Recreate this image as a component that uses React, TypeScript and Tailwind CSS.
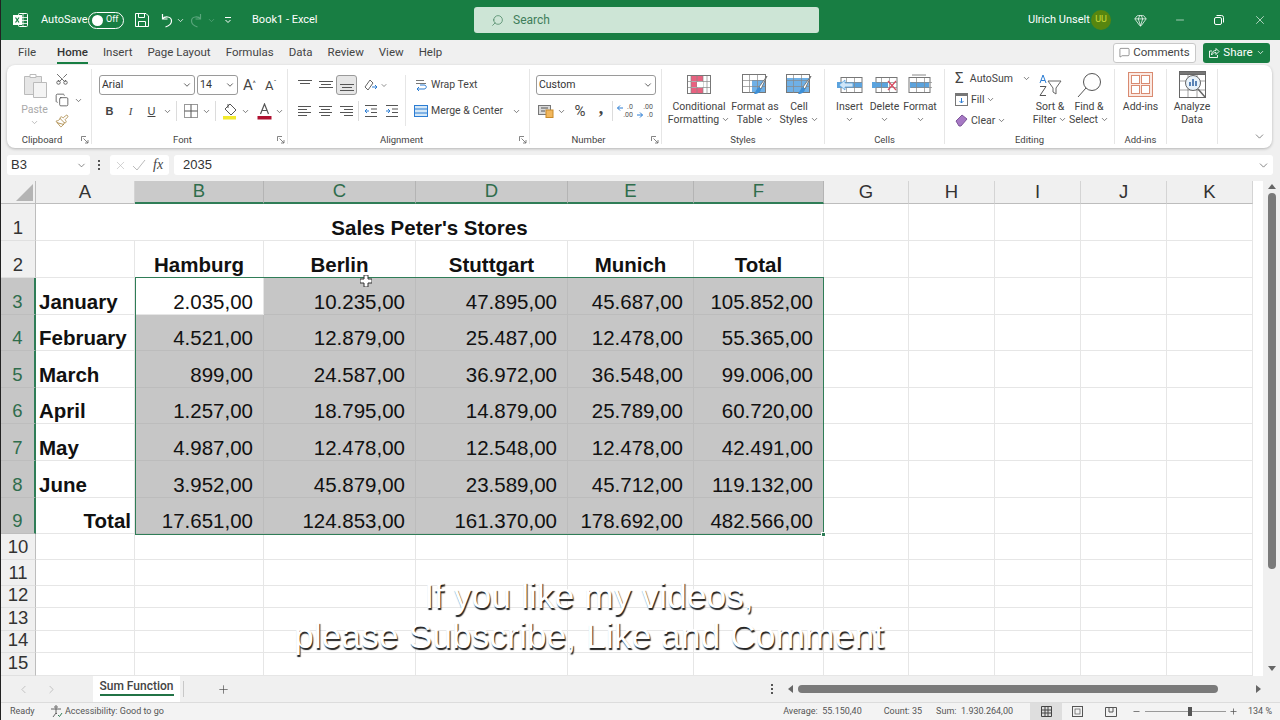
import { ChevronDown, ChevronLeft, ChevronRight, Minus, Plus, Search, X, Copy, Scissors, Paintbrush, Gem, MessageSquare } from "lucide-react";
import type { ReactNode } from "react";

const columns = ["A", "B", "C", "D", "E", "F", "G", "H", "I", "J", "K"];
const selectedColumns = ["B", "C", "D", "E", "F"];

const salesRows = [
  ["January", "2.035,00", "10.235,00", "47.895,00", "45.687,00", "105.852,00"],
  ["February", "4.521,00", "12.879,00", "25.487,00", "12.478,00", "55.365,00"],
  ["March", "899,00", "24.587,00", "36.972,00", "36.548,00", "99.006,00"],
  ["April", "1.257,00", "18.795,00", "14.879,00", "25.789,00", "60.720,00"],
  ["May", "4.987,00", "12.478,00", "12.548,00", "12.478,00", "42.491,00"],
  ["June", "3.952,00", "45.879,00", "23.589,00", "45.712,00", "119.132,00"],
  ["Total", "17.651,00", "124.853,00", "161.370,00", "178.692,00", "482.566,00"],
];

const cities = ["Hamburg", "Berlin", "Stuttgart", "Munich", "Total"];

function Chev({ className = "text-[#555]" }: { className?: string }) {
  return <ChevronDown size={9} strokeWidth={2} className={className} />;
}

function Slot({ children, className = "w-[21px]" }: { children: ReactNode; className?: string }) {
  return <div className={`h-5 flex items-center justify-center shrink-0 ${className}`}>{children}</div>;
}

function VSep() {
  return <div className="w-px h-5 bg-[#dcdcdc] mx-[3px] shrink-0" />;
}

function HorizontalAlign({ kind }: { kind: "left" | "center" | "right" }) {
  const short = kind === "left" ? "M1 5.500h9M1 11.500h9" : kind === "center" ? "M3 5.500h9M3 11.500h9" : "M5 5.500h9M5 11.500h9";
  return (
    <svg width="15" height="14" viewBox="0 0 15 14" fill="none" stroke="#555">
      <path d="M1 2.500h13M1 8.500h13" />
      <path d={short} />
    </svg>
  );
}

function VerticalAlign({ pos }: { pos: "top" | "mid" | "bot" }) {
  const y = pos === "top" ? [2.5, 5.5] : pos === "mid" ? [3.5, 6.5, 9.5] : [6.5, 9.5, 12.5];
  return (
    <svg width="16" height="14" viewBox="0 0 16 14" stroke="#555" strokeWidth="1">
      {y.map((v, i) => (
        <line key={v} x1={i % 2 ? 3 : 1} x2={i % 2 ? 13 : 15} y1={v} y2={v} />
      ))}
    </svg>
  );
}

function ConditionalIcon() {
  return (
    <svg width="24" height="20" viewBox="0 0 24 20">
      <rect x="0.5" y="0.5" width="23" height="18" fill="#fff" stroke="#777" />
      <rect x="4" y="1" width="12" height="5" fill="#e8617f" />
      <rect x="4" y="7" width="6" height="5" fill="#e8617f" />
      <rect x="4" y="13" width="12" height="5" fill="#e8617f" />
      <path d="M4 1v18M10 1v18M16 1v18M20 1v18M1 6.5h22M1 12.5h22" stroke="#888" strokeWidth="0.7" fill="none" />
      <rect x="10" y="7" width="6" height="5" fill="#fff" />
    </svg>
  );
}

function TableBrushIcon({ cell }: { cell?: boolean }) {
  return (
    <svg width="26" height="24" viewBox="0 0 26 24">
      <rect x="0.5" y="1.5" width="23" height="18" fill="#fff" stroke="#777" />
      <rect x={cell ? 1 : 10} y={cell ? 5 : 7} width={cell ? 22 : 13} height={cell ? 14 : 12} fill="#6fb0e6" />
      <path d="M7.5 2v18M15.5 2v18M1 7.5h22M1 13.5h22" stroke="#888" strokeWidth="0.7" fill="none" />
      <path d="M25 3 17 14l2 2z" fill="#fff" stroke="#666" strokeWidth="0.8" />
      <path d="M17 14c-2 1-3 4-5 7 4 0 7-2 7-5z" fill="#3d8fd6" />
    </svg>
  );
}

function CellsIcon({ kind }: { kind: "insert" | "delete" | "format" }) {
  return (
    <svg width="26" height="21" viewBox="0 0 26 21">
      {kind === "format" && <path d="M5 1h14" stroke="#888" strokeWidth="1" />}
      <rect x={kind === "format" ? 2 : 4} y="3.5" width="21" height="15" fill="#fff" stroke="#777" />
      <rect x={kind === "format" ? 3 : 0} y="8" width={kind === "format" ? 19 : kind === "delete" ? 16 : 25} height="6" fill="#5ba3de" />
      <path d="M9.5 4v14M17.5 4v14M4 8.5h21M4 13.5h21" stroke="#888" strokeWidth="0.7" fill="none" />
      {kind === "insert" && <path d="M8 6 2 11l6 5v-3h8v-4H8z" fill="#cfe6f8" stroke="#5ba3de" strokeWidth="0.8" />}
      {kind === "delete" && <path d="m16 7 8 9M24 7l-8 9" stroke="#d9485f" strokeWidth="1.2" />}
    </svg>
  );
}

function BigButton({ icon, lines, className, chevLine }: { icon: ReactNode; lines: string[]; className: string; chevLine?: boolean }) {
  return (
    <div className={`flex flex-col items-center shrink-0 ${className}`}>
      <div className="h-[31px] flex items-center justify-center">{icon}</div>
      {lines.map((line, i) => (
        <div key={line} className="h-[13px] leading-[13px] whitespace-nowrap flex items-center gap-[2px]">
          {line}
          {chevLine && i === lines.length - 1 && <Chev />}
        </div>
      ))}
      {!chevLine && lines.length === 1 && (
        <div className="h-[13px] flex items-center">
          <Chev />
        </div>
      )}
    </div>
  );
}

function Launcher() {
  return (
    <svg width="8" height="8" viewBox="0 0 8 8" className="absolute right-[2px] bottom-0" fill="none" stroke="#666" strokeWidth="0.8">
      <path d="M0.5 5V0.5H5M2.5 2.5 7 7M7 4v3H4" />
    </svg>
  );
}

function Group({ label, className, launcher, children }: { label: string; className: string; launcher?: boolean; children: ReactNode }) {
  return (
    <div className={`relative my-[4px] flex flex-col shrink-0 border-r border-[#e6e6e6] ${className}`}>
      <div className="flex-1 min-h-0">{children}</div>
      <div className={`h-[14px] -mb-[3px] text-center text-[9.5px] leading-[14px] text-[#444] ${launcher ? "pr-[14px]" : ""}`}>{label}</div>
      {launcher && <Launcher />}
    </div>
  );
}

function SelectBox({ text, className }: { text: string; className: string }) {
  return (
    <div className={`h-5 bg-white border border-[#9a9a9a] rounded-[3px] flex items-center justify-between pl-[2px] pr-[2px] text-[10.5px] text-[#333] shrink-0 ${className}`}>
      <span>{text}</span>
      <ChevronDown size={10} strokeWidth={2} className="text-[#444]" />
    </div>
  );
}

function TitleBar() {
  return (
    <div className="h-10 bg-[#187e43] flex items-center text-white text-[11px] shrink-0">
      <svg width="16" height="16" viewBox="0 0 16 16" className="ml-3" fill="none" stroke="#fff">
        <rect x="5.5" y="1.5" width="9" height="13" rx="1" />
        <path d="M10 2v12M6 5.5h8M6 8.5h8M6 11.5h8" strokeWidth="0.8" />
        <rect x="0.5" y="3.5" width="8" height="9" fill="#fff" />
        <path d="m2.5 5.5 3.5 5M6 5.5l-3.5 5" stroke="#187e43" strokeWidth="1.2" />
      </svg>
      <span className="ml-[12px] w-[46px]">AutoSave</span>
      <div className="ml-[1px] w-9 h-[17px] rounded-full border border-white flex items-center pl-[3px] gap-[3px]">
        <div className="size-[11px] rounded-full bg-white" />
        <span className="text-[9px]">Off</span>
      </div>
      <svg width="14" height="14" viewBox="0 0 14 14" className="ml-[11px]" fill="none" stroke="#fff" strokeWidth="1">
        <path d="M0.5 0.5h10.5l2.5 2.5v10.5H0.5z" />
        <path d="M3.5 0.5v4h6v-4M3.5 13.5v-5h7v5" />
      </svg>
      <svg width="15" height="15" viewBox="0 0 15 15" className="ml-[9px]" fill="none" stroke="#fff" strokeWidth="1.2">
        <path d="M4.5 1v5h5M4.5 6c2-3 9-3 9 2 0 3-3 5-6 6" />
      </svg>
      <ChevronDown size={9} className="ml-[3px]" />
      <svg width="15" height="15" viewBox="0 0 15 15" className="ml-[5px]" fill="none" stroke="#5aa57c" strokeWidth="1.2">
        <path d="M10.5 1v5h-5M10.5 6c-2-3-9-3-9 2 0 3 3 5 6 6" />
      </svg>
      <ChevronDown size={9} className="ml-[2px] text-[#5aa57c]" />
      <svg width="8" height="8" viewBox="0 0 8 8" className="ml-[8px]" fill="none" stroke="#fff" strokeWidth="1">
        <path d="M1 1.5h6M1.500 4l2.500 2.500L6.500 4" />
      </svg>
      <span className="ml-5 w-[66px] whitespace-nowrap">Book1 - Excel</span>
      <div className="ml-[156px] w-[345px] h-[26px] bg-[#cde5d6] rounded-[3px] flex items-center pl-[17px] text-[#3f7d5a] text-[12px]">
        <Search size={13} strokeWidth={1.3} className="-scale-x-100" />
        <span className="ml-[9px]">Search</span>
      </div>
      <span className="ml-[209px] w-[57px] whitespace-nowrap">Ulrich Unselt</span>
      <div className="ml-[6px] size-5 rounded-full bg-[#57860f] text-[#c9db3c] text-[9px] flex items-center justify-center">UU</div>
      <Gem size={13} strokeWidth={1.4} className="ml-[23px]" />
      <Minus size={12} strokeWidth={1.2} className="ml-[27px]" />
      <svg width="10" height="10" viewBox="0 0 10 10" className="ml-[28px]" fill="none" stroke="#fff">
        <rect x="0.5" y="2.500" width="7" height="7" rx="1.500" />
        <path d="M2.500 0.500h5a2 2 0 0 1 2 2v5" />
      </svg>
      <X size={14} strokeWidth={1.1} className="ml-[29px]" />
    </div>
  );
}

function MenuBar() {
  const tabs = [
    ["File", "ml-[17px]"],
    ["Home", "ml-[21px]"],
    ["Insert", "ml-[15px]"],
    ["Page Layout", "ml-[15px]"],
    ["Formulas", "ml-[15px]"],
    ["Data", "ml-[15px]"],
    ["Review", "ml-[15px]"],
    ["View", "ml-[15px]"],
    ["Help", "ml-[15px]"],
  ];
  return (
    <div className="h-[25px] flex items-center text-[11.5px] text-[#444] bg-[#f0f0f0] shrink-0">
      {tabs.map(([tab, margin]) => (
        <div key={tab} className={`relative h-full flex items-center whitespace-nowrap ${margin}`}>
          <span className={tab === "Home" ? "font-medium text-[#333]" : ""}>{tab}</span>
          {tab === "Home" && <div className="absolute left-0 right-0 bottom-[1px] h-[2px] bg-[#187e43]" />}
        </div>
      ))}
      <div className="ml-auto w-[83px] h-[20px] bg-white border border-[#c8c8c8] rounded-[3px] flex items-center justify-center gap-[3px]">
        <MessageSquare size={11} strokeWidth={1.2} />
        Comments
      </div>
      <div className="ml-[7px] mr-[10px] w-[67px] h-[20px] bg-[#187e43] text-white rounded-[3px] flex items-center justify-center gap-[3px]">
        <svg width="12" height="12" viewBox="0 0 12 12" fill="none" stroke="#fff" strokeWidth="0.9">
          <path d="M4 4H1.500v6.500h8V8" />
          <path d="M3.500 8c0-3 2-4.500 4.500-4.500V1.500L11 4.500 8 7.500V5.500C6 5.500 4.500 6.500 3.500 8z" />
        </svg>
        Share
        <ChevronDown size={9} />
      </div>
    </div>
  );
}

function Ribbon() {
  return (
    <div className="ml-[6px] w-[1265px] h-[83px] bg-white rounded-lg shadow-[0_1px_3px_rgba(0,0,0,0.25)] flex text-[10.5px] text-[#444] shrink-0">
      <Group label="Clipboard" className="w-[85px]" launcher>
        <div className="flex pl-[15px]">
          <div className="w-[25px] flex flex-col items-center text-[#aaa]">
            <svg width="24" height="26" viewBox="0 0 24 26" className="mt-[3px]" fill="#e6e6e6" stroke="#bbb">
              <path d="M1.500 4.500h17v18h-17z" />
              <path d="M7 2.500h6v3H7z" fill="#fff" />
              <path d="M10.500 10.500h13v15h-13z" fill="#f4f4f4" />
            </svg>
            <span className="mt-[5px] leading-[13px]">Paste</span>
            <ChevronDown size={9} className="mt-[2px]" />
          </div>
          <div className="ml-2 pt-[3px] flex flex-col items-start gap-[7px]">
            <Scissors size={14} strokeWidth={1.3} className="-rotate-90 text-[#444]" />
            <div className="flex items-center gap-[5px]">
              <Copy size={14} strokeWidth={1.3} className="text-[#444]" />
              <Chev />
            </div>
            <Paintbrush size={14} strokeWidth={1.3} className="text-[#a07a30]" />
          </div>
        </div>
      </Group>

      <Group label="Font" className="w-[196px]" launcher>
        <div className="pl-[7px] pt-[6px]">
          <div className="flex items-center">
            <SelectBox text="Arial" className="w-[96px]" />
            <SelectBox text="14" className="ml-[2px] w-[41px]" />
            <span className="ml-[5px] text-[15px] leading-none w-[21px]">
              A<sup className="text-[7px]">^</sup>
            </span>
            <span className="ml-[1px] text-[13px] leading-none w-[16px]">
              A<sup className="text-[7px]">ˇ</sup>
            </span>
          </div>
          <div className="flex items-center mt-[6px]">
            <Slot><b className="text-[11px] font-['Liberation_Sans',sans-serif]">B</b></Slot>
            <Slot><i className="text-[11px] font-['Liberation_Serif',serif]">I</i></Slot>
            <Slot><u className="text-[11px] font-['Liberation_Sans',sans-serif]">U</u></Slot>
            <Slot className="w-[11px]"><Chev /></Slot>
            <VSep />
            <Slot>
              <svg width="14" height="14" viewBox="0 0 14 14" fill="none" stroke="#999">
                <rect x="0.5" y="0.500" width="13" height="13" />
                <path d="M7 0.500v13M0.500 7h13" stroke="#555" />
              </svg>
            </Slot>
            <Slot className="w-[11px]"><Chev /></Slot>
            <VSep />
            <Slot>
              <svg width="16" height="17" viewBox="0 0 16 17">
                <path d="m8 1 6 6-5 5-6-6z" fill="#fff" stroke="#555" />
                <path d="M6 1v4" stroke="#555" />
                <rect x="1" y="13" width="13" height="3.500" fill="#f2ea2c" />
              </svg>
            </Slot>
            <Slot className="w-[11px]"><Chev /></Slot>
            <Slot className="ml-[3px] w-[20px]">
              <svg width="15" height="17" viewBox="0 0 15 17">
                <path d="m3.500 11 4-10 4 10M5 7.500h5" stroke="#555" fill="none" strokeWidth="1.200" />
                <rect x="0.500" y="13" width="14" height="3.500" fill="#b01030" />
              </svg>
            </Slot>
            <Slot className="w-[11px]"><Chev /></Slot>
          </div>
        </div>
      </Group>

      <Group label="Alignment" className="w-[242px]" launcher>
        <div className="flex pt-[6px]">
          <div className="pl-[6px] w-[118px] h-[51px] border-r border-[#e6e6e6]">
            <div className="flex items-center">
              <Slot><VerticalAlign pos="top" /></Slot>
              <Slot><VerticalAlign pos="mid" /></Slot>
              <Slot className="w-[21px] bg-[#e6e6e6] border border-[#9a9a9a] rounded-[3px]"><VerticalAlign pos="bot" /></Slot>
              <Slot className="ml-[3px] w-[20px]">
                <svg width="15" height="14" viewBox="0 0 15 14" fill="none" stroke="#666">
                  <path d="m2 9 5-7 3 3-5 7z" />
                  <path d="M9 9h5m-2-2 2 2-2 2" stroke="#2b7cd3" />
                </svg>
              </Slot>
              <Slot className="w-[8px]"><Chev /></Slot>
            </div>
            <div className="flex items-center mt-[6px]">
              <Slot><HorizontalAlign kind="left" /></Slot>
              <Slot><HorizontalAlign kind="center" /></Slot>
              <Slot><HorizontalAlign kind="right" /></Slot>
              <div className="w-px h-5 bg-[#dcdcdc] mx-[1px]" />
              <Slot className="w-[21px]">
                <svg width="14" height="14" viewBox="0 0 14 14" fill="none" stroke="#555">
                  <path d="M1 1.500h12M7 5h6M7 8.500h6M1 12.500h12" />
                  <path d="M5 7H1m2-2-2 2 2 2" stroke="#2b7cd3" />
                </svg>
              </Slot>
              <Slot className="w-[21px]">
                <svg width="14" height="14" viewBox="0 0 14 14" fill="none" stroke="#555">
                  <path d="M1 1.500h12M7 5h6M7 8.500h6M1 12.500h12" />
                  <path d="M1 7h4M3 5l2 2-2 2" stroke="#2b7cd3" />
                </svg>
              </Slot>
            </div>
          </div>
          <div className="pl-2 flex flex-col">
            <div className="h-5 flex items-center gap-[2px]">
              <svg width="14" height="14" viewBox="0 0 14 14" fill="none">
                <path d="M2 2.500h8M2 5.500h10" stroke="#777" />
                <path d="M3 11h7c3 0 3-4 0-4H6M5 9l-2 2 2 2" stroke="#2b7cd3" />
              </svg>
              <span className="ml-[1px]">Wrap Text</span>
            </div>
            <div className="h-5 mt-[6px] flex items-center gap-[2px]">
              <svg width="14" height="14" viewBox="0 0 14 14" fill="#d5e8f7" stroke="#2b7cd3">
                <rect x="0.500" y="1.500" width="13" height="11" />
                <path d="M1 5h12M1 9h12" />
              </svg>
              <span className="ml-[1px] w-[71px] whitespace-nowrap">Merge &amp; Center</span>
              <span className="ml-[8px]"><Chev /></span>
            </div>
          </div>
        </div>
      </Group>

      <Group label="Number" className="w-[132px]" launcher>
        <div className="pl-[6px] pt-[6px]">
          <SelectBox text="Custom" className="w-[120px]" />
          <div className="flex items-center mt-[6px]">
            <Slot className="w-[20px]">
              <svg width="16" height="13" viewBox="0 0 16 13">
                <rect x="0.500" y="0.500" width="12" height="9" fill="#d9d9d9" stroke="#777" />
                <path d="M3 3h7M3 6h4" stroke="#555" />
                <rect x="8" y="5" width="7" height="7.500" fill="#f2b75c" stroke="#c88a2a" />
              </svg>
            </Slot>
            <Slot className="w-[10px]"><Chev /></Slot>
            <Slot className="ml-[4px] w-[20px]"><span className="text-[15px]">%</span></Slot>
            <Slot className="ml-[1px] w-[20px]"><span className="text-[18px] font-bold leading-none -mt-[6px] font-['Liberation_Serif',serif]">,</span></Slot>
            <div className="ml-[1px] w-px h-5 bg-[#dcdcdc]" />
            <Slot className="ml-[2px] w-[20px]">
              <svg width="6" height="6" viewBox="0 0 6 6" className="-mt-[7px]" fill="none" stroke="#2b7cd3">
                <path d="M6 3H0.500M3 0.500 0.500 3 3 5.500" />
              </svg>
              <div className="text-[7px] leading-[8px] text-right text-[#555]">
                <div>.0</div>
                <div>.00</div>
              </div>
            </Slot>
            <Slot className="w-[20px]">
              <svg width="6" height="6" viewBox="0 0 6 6" className="mt-[7px]" fill="none" stroke="#2b7cd3">
                <path d="M0 3h5.500M3 0.500 5.500 3 3 5.500" />
              </svg>
              <div className="text-[7px] leading-[8px] text-right text-[#555]">
                <div>.00</div>
                <div>.0</div>
              </div>
            </Slot>
          </div>
        </div>
      </Group>

      <Group label="Styles" className="w-[163px]">
        <div className="flex pl-[7px]">
          <BigButton className="w-[60px]" icon={<ConditionalIcon />} lines={["Conditional", "Formatting"]} chevLine />
          <BigButton className="w-[52px]" icon={<TableBrushIcon />} lines={["Format as", "Table"]} chevLine />
          <BigButton className="w-[36px]" icon={<TableBrushIcon cell />} lines={["Cell", "Styles"]} chevLine />
        </div>
      </Group>

      <Group label="Cells" className="w-[120px]">
        <div className="flex pl-[7px]">
          <BigButton className="w-[35px]" icon={<CellsIcon kind="insert" />} lines={["Insert"]} />
          <BigButton className="w-[35px]" icon={<CellsIcon kind="delete" />} lines={["Delete"]} />
          <BigButton className="w-[36px]" icon={<CellsIcon kind="format" />} lines={["Format"]} />
        </div>
      </Group>

      <Group label="Editing" className="w-[170px]">
        <div className="flex">
          <div className="w-[86px] pl-[10px] flex flex-col">
            <div className="-mt-[1px] h-[21px] flex items-center">
              <span className="w-[16px] text-[15px] leading-none">Σ</span>
              <span>AutoSum</span>
              <span className="ml-[9px]"><Chev /></span>
            </div>
            <div className="h-[21px] flex items-center">
              <svg width="13" height="13" viewBox="0 0 13 13" className="mr-[3px]">
                <rect x="0.500" y="0.500" width="12" height="12" fill="#fff" stroke="#777" />
                <path d="M1 1h11v2H1z" fill="#777" />
                <path d="M6.500 5v5M4.500 8l2 2 2-2" stroke="#2b7cd3" fill="none" />
              </svg>
              <span>Fill</span>
              <span className="ml-[2px]"><Chev /></span>
            </div>
            <div className="h-[21px] flex items-center">
              <svg width="13" height="13" viewBox="0 0 13 13" className="mr-[3px]">
                <path d="m1 7 6-6 5 4-6 7H4z" fill="#a678c4" stroke="#7d5699" />
              </svg>
              <span>Clear</span>
              <span className="ml-[2px]"><Chev /></span>
            </div>
          </div>
          <BigButton
            className="w-[38px]"
            icon={
              <svg width="24" height="24" viewBox="0 0 24 24" fill="none">
                <path d="M2 10 5 2l3 8M3 7.500h4" stroke="#2b7cd3" />
                <path d="M2 13.500h6L2 22.500h6" stroke="#555" />
                <path d="M10 8h13l-5 7v6l-3-2v-4z" stroke="#666" />
              </svg>
            }
            lines={["Sort &", "Filter"]}
            chevLine
          />
          <BigButton
            className="w-[40px]"
            icon={
              <svg width="26" height="26" viewBox="0 0 26 26" fill="none" stroke="#555">
                <circle cx="16" cy="10" r="8.500" />
                <path d="m10 16-8 9" />
              </svg>
            }
            lines={["Find &", "Select"]}
            chevLine
          />
        </div>
      </Group>

      <Group label="Add-ins" className="w-[52px]">
        <div className="flex justify-center">
          <div className="w-full flex flex-col items-center">
            <div className="h-[31px] flex items-center justify-center">
              <svg width="25" height="25" viewBox="0 0 25 25" fill="none" stroke="#d98a70">
                <rect x="0.500" y="0.500" width="24" height="24" fill="#fbe9e2" />
                <rect x="3.500" y="3.500" width="8" height="8" fill="#fff" />
                <rect x="13.500" y="3.500" width="8" height="8" fill="#fff" />
                <rect x="3.500" y="13.500" width="8" height="8" fill="#fff" />
                <rect x="13.500" y="13.500" width="8" height="8" fill="#fff" />
              </svg>
            </div>
            <span className="leading-[13px]">Add-ins</span>
          </div>
        </div>
      </Group>

      <Group label="" className="w-[51px]">
        <BigButton
          className="w-full"
          icon={
            <svg width="27" height="27" viewBox="0 0 27 27" fill="none" stroke="#666">
              <rect x="0.500" y="0.500" width="26" height="26" fill="#fff" />
              <rect x="0.500" y="0.500" width="26" height="3" fill="#777" />
              <path d="M1 10h26M1 19h26M9 4v23M18 4v23" strokeWidth="0.600" />
              <circle cx="14" cy="12" r="7.500" fill="#e8f2fa" />
              <path d="M11 15v-4M14 15V8M17 15v-5" stroke="#2b5f9e" strokeWidth="1.500" />
              <path d="m19 18 7 8" strokeWidth="1.500" />
            </svg>
          }
          lines={["Analyze", "Data"]}
        />
      </Group>

      <div className="flex-1 flex items-end justify-end pr-[6px] pb-[5px]">
        <ChevronDown size={13} strokeWidth={1.3} className="text-[#555]" />
      </div>
    </div>
  );
}

function FormulaBar() {
  return (
    <div className="h-[33px] pt-[7px] pb-[6px] flex items-stretch text-[#333] shrink-0">
      <div className="ml-[6px] w-[83px] bg-white rounded-[3px] flex items-center justify-between pl-[4px] pr-[3px] text-[13px] font-['Liberation_Sans',sans-serif]">
        B3
        <ChevronDown size={11} strokeWidth={1.5} className="text-[#555]" />
      </div>
      <div className="ml-[8px] w-[3px] flex flex-col justify-center gap-[2px]">
        <div className="size-[2px] bg-[#555]" />
        <div className="size-[2px] bg-[#555]" />
        <div className="size-[2px] bg-[#555]" />
      </div>
      <div className="ml-[9px] w-[59px] bg-white rounded-[3px] flex items-center pl-[4px] gap-[5px] text-[#bbb]">
        <X size={13} strokeWidth={1.2} />
        <svg width="14" height="12" viewBox="0 0 14 12" fill="none" stroke="#bbb"><path d="m1 7 4 4 8-10" /></svg>
        <span className="ml-[2px] italic text-[#444] text-[14px] leading-none font-['Liberation_Serif',serif]">fx</span>
      </div>
      <div className="ml-[5px] w-[1099px] bg-white rounded-[3px] flex items-center justify-between pl-[9px] pr-[3px] text-[13px] font-['Liberation_Sans',sans-serif]">
        2035
        <ChevronDown size={13} strokeWidth={1.3} className="text-[#555]" />
      </div>
    </div>
  );
}

function Cell({ children, className = "" }: { children?: ReactNode; className?: string }) {
  return (
    <div className={`border-r border-b flex items-end text-[20.5px] leading-[24px] text-[#111] whitespace-nowrap overflow-hidden ${className}`}>
      {children}
    </div>
  );
}

function RowHeader({ n, selected }: { n: number; selected: boolean }) {
  return (
    <div
      className={`flex items-end justify-center text-[18.5px] leading-[24px] border-b ${
        selected
          ? "bg-[#c6c6c6] text-[#2f6d4c] border-[#bdbdbd] border-r-2 border-r-[#2f7d57]"
          : "bg-[#f0f0f0] text-[#333] border-[#e0e0e0] border-r border-r-[#bdbdbd]"
      }`}
    >
      {n}
    </div>
  );
}

function SheetGrid() {
  const blank = "border-[#e6e6e6]";
  const tail = ["G", "H", "I", "J", "K"];
  return (
    <div className="relative flex-1 grid grid-cols-[35px_99px_129px_152px_152px_126px_130px_85px_86px_86px_86px_86px] grid-rows-[23px_37px_37px_37px_36px_37px_36px_37px_37px_36px_26px_26px_22px_23px_22px_23px] font-['Liberation_Sans',sans-serif] overflow-hidden">
      <div className="bg-[#f0f0f0] border-r border-b border-[#bdbdbd] flex items-end justify-end p-[2px]">
        <div className="size-0 border-l-[17px] border-l-transparent border-b-[17px] border-b-[#b4b4b4]" />
      </div>
      {columns.map((col) => {
        const sel = selectedColumns.includes(col);
        return (
          <div
            key={col}
            className={`flex items-center justify-center text-[18.5px] leading-none border-r ${
              sel
                ? "bg-[#cacaca] text-[#2f6d4c] border-[#b4b4b4] border-b-2 border-b-[#2f7d57]"
                : "bg-[#f0f0f0] text-[#333] border-[#d4d4d4] border-b border-b-[#bdbdbd]"
            }`}
          >
            {col}
          </div>
        );
      })}

      <RowHeader n={1} selected={false} />
      <Cell className={`col-span-6 justify-center font-bold ${blank}`}>Sales Peter&apos;s Stores</Cell>
      {tail.map((c) => <Cell key={c} className={blank} />)}

      <RowHeader n={2} selected={false} />
      <Cell className={blank} />
      {cities.map((city) => (
        <Cell key={city} className={`justify-center font-bold ${blank}`}>{city}</Cell>
      ))}
      {tail.map((c) => <Cell key={c} className={blank} />)}

      {salesRows.map((row, r) => (
        <div key={row[0]} className="contents">
          <RowHeader n={r + 3} selected />
          <Cell className={`font-bold ${blank} ${row[0] === "Total" ? "justify-end pr-[3px]" : "pl-[3px]"}`}>{row[0]}</Cell>
          {row.slice(1).map((value, c) => (
            <Cell
              key={c}
              className={`justify-end pr-[10px] ${r === 0 && c === 0 ? "bg-white border-[#e6e6e6]" : "bg-[#c6c6c6] border-[#bcbcbc]"}`}
            >
              {value}
            </Cell>
          ))}
          {tail.map((t) => <Cell key={t} className={blank} />)}
        </div>
      ))}

      {[10, 11, 12, 13, 14, 15].map((n) => (
        <div key={n} className="contents">
          <RowHeader n={n} selected={false} />
          {columns.map((c) => <Cell key={c} className={blank} />)}
        </div>
      ))}

      {/* selection frame sits over the cells */}
      <div className="absolute left-[134px] top-[96px] w-[689px] h-[258px] border-[1.5px] border-[#2f7d57] pointer-events-none">
        <div className="absolute -right-[3px] -bottom-[3px] size-[5px] bg-[#2f7d57] border border-white" />
      </div>

      {/* mouse cursor */}
      <svg width="12" height="12" viewBox="0 0 12 12" className="absolute left-[359px] top-[94px]">
        <path d="M4 0h4v4h4v4H8v4H4V8H0V4h4z" fill="#fff" stroke="#333" strokeWidth="1" />
      </svg>
    </div>
  );
}

function VerticalScroll() {
  return (
    <div className="w-[17px] bg-[#f0f0f0] flex flex-col items-center shrink-0">
      <div className="mt-[3px] size-0 border-x-[4px] border-x-transparent border-b-[5px] border-b-[#666]" />
      <div className="mt-[4px] w-2 h-[376px] bg-[#7a7a7a] rounded-full" />
      <div className="mt-auto mb-[5px] size-0 border-x-[4px] border-x-transparent border-t-[5px] border-t-[#666]" />
    </div>
  );
}

function TabStrip() {
  return (
    <div className="h-[26px] bg-[#f0f0f0] flex items-center shrink-0 text-[#444]">
      <ChevronLeft size={13} strokeWidth={1.2} className="ml-[16px] text-[#aaa]" />
      <ChevronRight size={13} strokeWidth={1.2} className="ml-[15px] text-[#aaa]" />
      <div className="ml-[35px] w-[87px] h-full bg-white flex flex-col items-center pt-[2px] text-[12px] font-medium">
        <span className="leading-[16px]">Sum Function</span>
        <div className="w-[74px] h-[2px] bg-[#217346]" />
      </div>
      <div className="ml-[3px] w-px h-4 bg-[#c8c8c8]" />
      <Plus size={13} strokeWidth={1.2} className="ml-[33px]" />
      <div className="ml-[541px] flex flex-col gap-[2px]">
        <div className="size-[2px] bg-[#555]" />
        <div className="size-[2px] bg-[#555]" />
        <div className="size-[2px] bg-[#555]" />
      </div>
      <div className="ml-[15px] size-0 border-y-[4px] border-y-transparent border-r-[5px] border-r-[#666]" />
      <div className="ml-[5px] w-[420px] h-2 rounded-full bg-[#7a7a7a]" />
      <div className="ml-[38px] size-0 border-y-[4px] border-y-transparent border-l-[5px] border-l-[#666]" />
    </div>
  );
}

function StatusBar() {
  return (
    <div className="h-[18px] flex items-center text-[9px] text-[#555] bg-[#f3f3f3] border-t border-[#dcdcdc] shrink-0">
      <span className="ml-[9px] w-[24px]">Ready</span>
      <svg width="13" height="13" viewBox="0 0 13 13" className="ml-[16px]" fill="none" stroke="#555" strokeWidth="0.9">
        <circle cx="6" cy="2" r="1.200" />
        <path d="M1 4h10M6 4v4L3 12M6 8l1 1" />
        <path d="m8 10 1.500 1.500L12 8" stroke="#217346" />
      </svg>
      <span className="ml-[2px] whitespace-nowrap">Accessibility: Good to go</span>
      <span className="ml-auto whitespace-nowrap">Average:&nbsp; 55.150,40</span>
      <span className="ml-[22px] whitespace-nowrap">Count: 35</span>
      <span className="ml-[14px] whitespace-nowrap">Sum:&nbsp; 1.930.264,00</span>
      <div className="ml-[17px] w-8 h-full bg-[#dedede] flex items-center justify-center">
        <svg width="11" height="11" viewBox="0 0 11 11" fill="none" stroke="#444">
          <path d="M0.500 0.500h10v10h-10zM4 1v10M7 1v10M1 4h10M1 7h10" />
        </svg>
      </div>
      <svg width="11" height="11" viewBox="0 0 11 11" className="ml-[10px]" fill="none" stroke="#555">
        <rect x="0.500" y="0.500" width="10" height="10" />
        <rect x="3" y="3" width="5" height="5" strokeWidth="0.700" />
      </svg>
      <svg width="12" height="10" viewBox="0 0 12 10" className="ml-[22px]" fill="none" stroke="#555">
        <path d="M0.500 0.500h11v9h-11zM4 1v4h4V1" />
      </svg>
      <Minus size={9} className="ml-[15px]" />
      <div className="ml-[4px] w-[81px] h-px bg-[#999] relative">
        <div className="absolute left-[43px] -top-[4px] w-[4px] h-[9px] bg-[#555]" />
      </div>
      <Plus size={9} className="ml-[3px]" />
      <span className="ml-[10px] mr-[8px] whitespace-nowrap">134 %</span>
    </div>
  );
}

export default function App() {
  return (
    <div className="relative w-[1280px] h-[720px] overflow-hidden flex flex-col bg-[#f0f0f0] border-l border-[#222] font-['Roboto','Noto_Sans',sans-serif]">
      <TitleBar />
      <MenuBar />
      <Ribbon />
      <FormulaBar />
      <div className="flex-1 min-h-0 flex bg-white">
        <SheetGrid />
        <VerticalScroll />
      </div>
      <TabStrip />
      <StatusBar />

      {/* video caption */}
      <div className="absolute left-0 right-[103px] top-[576px] text-center text-white text-[35.500px] leading-[40px] font-['Liberation_Sans',sans-serif] [text-shadow:1px_2px_1px_#222] pointer-events-none">
        <div>If you like my videos,</div>
        <div>please Subscribe, Like and Comment</div>
      </div>
    </div>
  );
}
